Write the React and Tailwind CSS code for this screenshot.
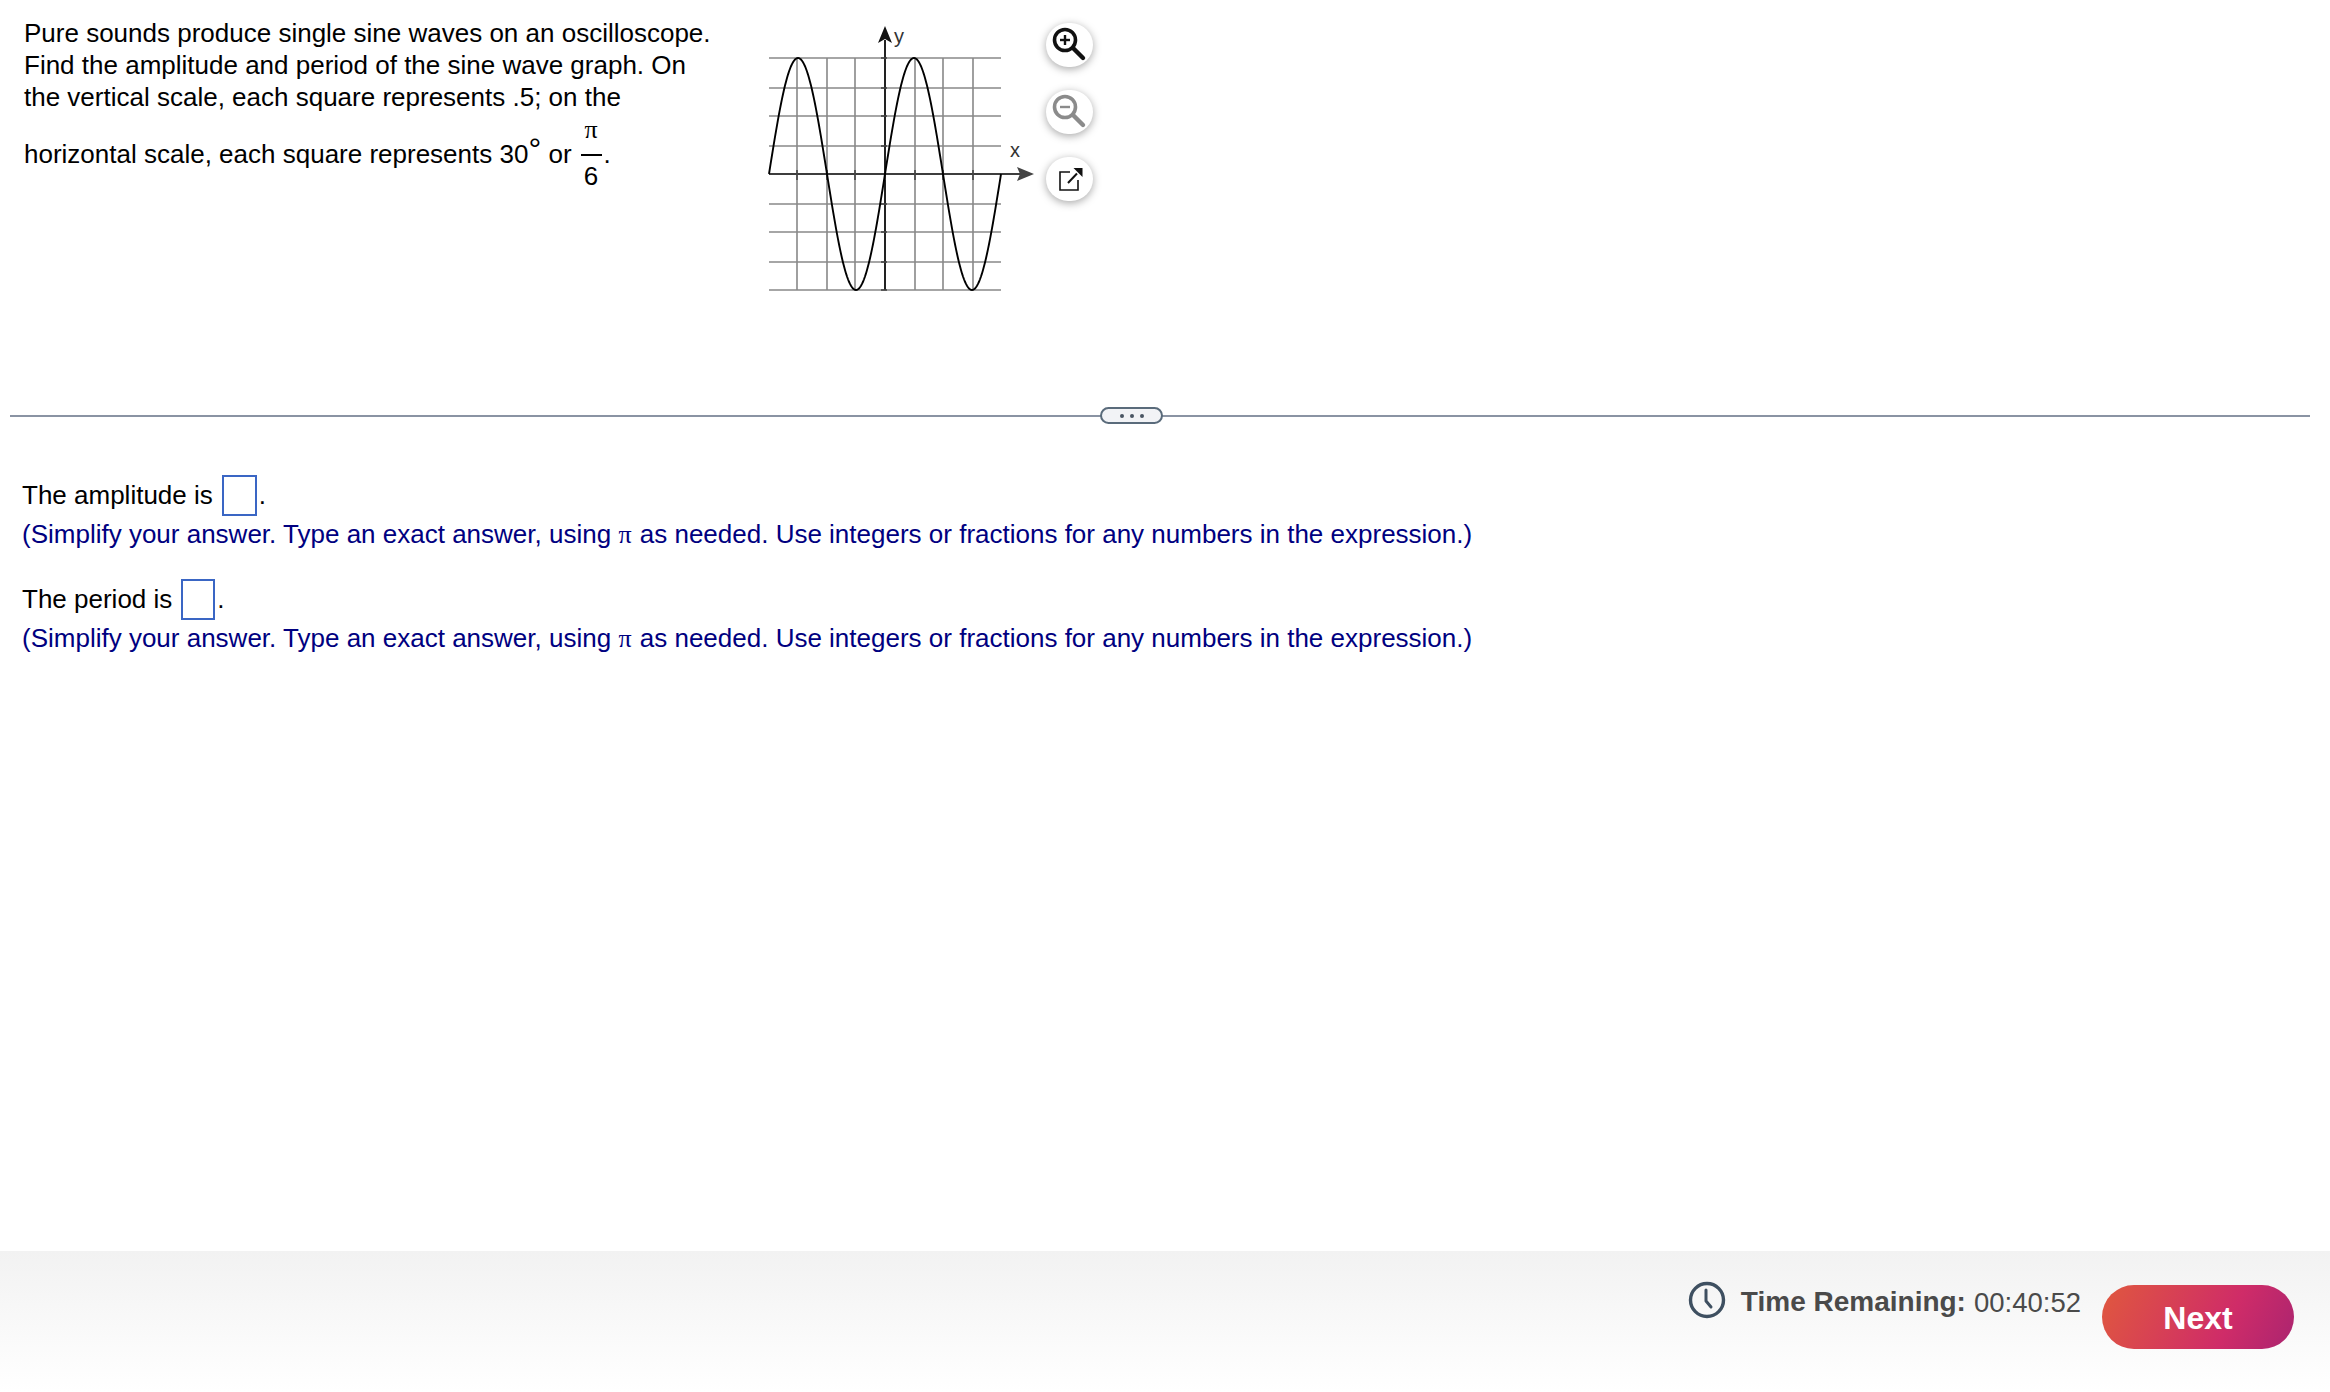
import React from 'react';

// grid lines read off the graph, in svg coords (svg origin sits at 760,10 on the page)
const gridX = [37, 67, 95, 155, 183, 213];
const tickX = [37, 67, 95, 125, 155, 183, 213];
const gridY = [48, 78, 106, 136, 194, 222, 252, 280];

function wavePath() {
  const pts = [];
  for (let x = 9; x <= 241; x += 1) {
    const y = 164 - 116 * Math.sin(((x - 125) * 2 * Math.PI) / 116);
    pts.push(`${x},${y.toFixed(2)}`);
  }
  return 'M' + pts.join(' L');
}

function Graph() {
  return (
    <svg width="280" height="290" viewBox="0 0 280 290" className="shrink-0">
      {gridX.map((x) => (
        <line key={x} x1={x} x2={x} y1="48" y2="280" stroke="#888" strokeWidth="1.6" />
      ))}
      {gridY.map((y) => (
        <line key={y} x1="9" x2="241" y1={y} y2={y} stroke="#888" strokeWidth="1.6" />
      ))}
      {/* axes */}
      <line x1="9" x2="260" y1="164" y2="164" stroke="#3d3d3d" strokeWidth="2" />
      <line x1="125" x2="125" y1="280" y2="30" stroke="#222" strokeWidth="2" />
      {tickX.map((x) => (
        <line key={x} x1={x} x2={x} y1="160" y2="170" stroke="#444" strokeWidth="1.6" />
      ))}
      {gridY.map((y) => (
        <line key={y} x1="121" x2="127" y1={y} y2={y} stroke="#444" strokeWidth="1.6" />
      ))}
      <path d="M125 16 L132 33 L125 29 L118 33 Z" fill="#111" />
      <path d="M274 164 L257 157 L260 164 L257 171 Z" fill="#444" />
      <path d={wavePath()} fill="none" stroke="#000" strokeWidth="1.9" />
      <text x="134" y="33" fontSize="20" fill="#333" fontFamily="Liberation Sans">y</text>
      <text x="250" y="147" fontSize="20" fill="#333" fontFamily="Liberation Sans">x</text>
    </svg>
  );
}

function RoundButton({ children }) {
  return (
    <button className="w-[47px] h-[44px] rounded-full bg-white flex items-center justify-center shadow-[0_2px_8px_rgba(0,0,0,0.35)]">
      {children}
    </button>
  );
}

function ZoomIcon({ color, plus }) {
  return (
    <svg width="36" height="36" viewBox="0 0 36 36" fill="none" stroke={color}>
      <circle cx="13" cy="13" r="10.5" strokeWidth="3.6" />
      <line x1="21" y1="21" x2="31" y2="31" strokeWidth="4.4" strokeLinecap="round" />
      <line x1="8" y1="13" x2="18" y2="13" strokeWidth="2.4" />
      {plus && <line x1="13" y1="8" x2="13" y2="18" strokeWidth="2.4" />}
    </svg>
  );
}

function Fraction() {
  return (
    <span className="inline-flex flex-col items-center align-middle ml-[9px] mr-[7px] leading-[26px]">
      <span className="h-[41px] flex items-end pb-[11px] font-['Liberation_Serif',serif]">π</span>
      <span className="w-[21px] h-[2px] bg-black"></span>
      <span className="h-[43px] pt-[7px]">6</span>
    </span>
  );
}

function Answer({ label, boxW }) {
  return (
    <div>
      <p className="text-black flex items-center h-[41px]">
        {label}
        <span className={`inline-block ${boxW} h-[41px] border-2 border-[#3a66c4] ml-[9px] mr-[2px]`}></span>
        .
      </p>
      <p className="text-[#000080] mt-[2px] leading-[32px] whitespace-nowrap">
        (Simplify your answer. Type an exact answer, using{' '}
        <span className="font-['Liberation_Serif',serif] mr-[1px]">π</span> as needed. Use integers or fractions for any
        numbers in the expression.)
      </p>
    </div>
  );
}

export default function App() {
  return (
    <div className="h-[1392px] flex flex-col bg-white font-['Liberation_Sans',Arial,sans-serif] text-[26px] text-black overflow-hidden">
      <div className="h-[406px] flex items-start pl-6">
        <div className="w-[700px] pt-[17px] leading-[32px] shrink-0">
          Pure sounds produce single sine waves on an oscilloscope. Find the amplitude and period of the sine wave graph.
          On the vertical scale, each square represents .5; on the horizontal scale, each square represents 30
          <span className="text-[32px] leading-none relative top-[-3px]">°</span> or
          <Fraction />
          <span className="ml-[-5px]">.</span>
        </div>
        <div className="pt-[10px] ml-[36px]">
          <Graph />
        </div>
        <div className="flex flex-col gap-[23px] pt-[23px] ml-[6px]">
          <RoundButton>
            <ZoomIcon color="#111" plus />
          </RoundButton>
          <RoundButton>
            <ZoomIcon color="#8b8b8b" />
          </RoundButton>
          <RoundButton>
            <svg width="28" height="28" viewBox="0 0 28 28" fill="none" stroke="#111" strokeWidth="1.6">
              <path d="M14 7 H4 V25 H22 V15" />
              <line x1="12" y1="18" x2="21" y2="8.5" strokeWidth="2" />
              <path d="M17.5 3 H26.5 V12 Z" fill="#111" stroke="none" />
            </svg>
          </RoundButton>
        </div>
      </div>

      <div className="relative h-[20px] ml-[10px] mr-[20px] flex items-center justify-center">
        <div className="w-full h-[2px] bg-[#8a93a3]"></div>
        <div className="absolute left-[1090px] top-[1px] w-[63px] h-[17px] rounded-full border-2 border-[#5a6b7b] bg-[#f2f3f6] flex items-center justify-center gap-[6px]">
          <span className="w-[4px] h-[4px] rounded-full bg-[#4a5563]"></span>
          <span className="w-[4px] h-[4px] rounded-full bg-[#4a5563]"></span>
          <span className="w-[4px] h-[4px] rounded-full bg-[#4a5563]"></span>
        </div>
      </div>

      <div className="pl-[22px] pt-[49px] flex flex-col gap-[28px]">
        <Answer label="The amplitude is" boxW="w-[35px]" />
        <Answer label="The period is" boxW="w-[34px]" />
      </div>

      <div className="mt-auto h-[141px] bg-gradient-to-b from-[#f2f2f2] to-white flex justify-end items-start pr-[36px] text-[#4a4a4a]">
        <div className="flex items-center pt-[30px] text-[28px]">
          <svg width="38" height="38" viewBox="0 0 38 38" fill="none" stroke="#3e4f60" className="mr-[15px] mt-[-4px]">
            <circle cx="19" cy="19" r="16.5" strokeWidth="3.4" />
            <path d="M18 9 V20 L23 26" strokeWidth="3" strokeLinecap="round" strokeLinejoin="round" />
          </svg>
          <span className="font-bold">Time Remaining:</span>
          <span className="ml-[8px] text-[27.5px] relative top-[1px]">00:40:52</span>
        </div>
        <button className="ml-[21px] mt-[34px] w-[192px] h-[64px] rounded-full bg-[linear-gradient(115deg,#e0583e_0%,#cf2c68_65%,#ab2470_100%)] text-white font-bold text-[32px] pt-[1px]">
          Next
        </button>
      </div>
    </div>
  );
}
